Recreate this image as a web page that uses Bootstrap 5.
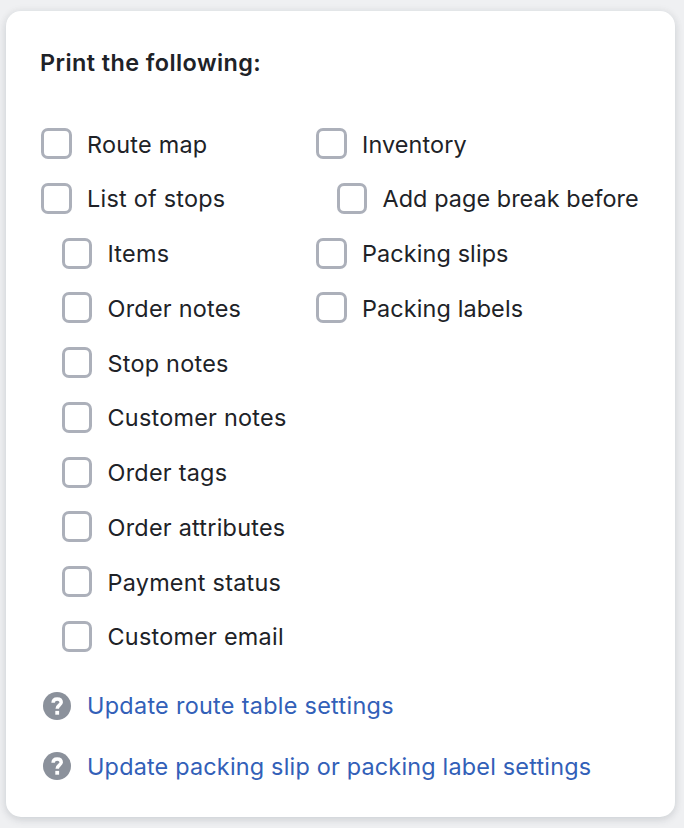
<!DOCTYPE html>
<html lang="en">
<head>
<meta charset="utf-8">
<meta name="viewport" content="width=device-width, initial-scale=1">
<title>Print options</title>
<link href="https://cdn.jsdelivr.net/npm/bootstrap@5.3.0/dist/css/bootstrap.min.css" rel="stylesheet">
<style>
body{background:#eff0f2;font-family:Inter,"Liberation Sans",sans-serif;font-size:23.4px;line-height:32px;letter-spacing:.25px;color:#202227;height:828px;overflow:hidden}
.print-card{margin:11px 9px 0 6px;height:806px;padding:36px 34px 0;border:0;border-radius:15px;background:#fff;box-shadow:0 0 10px rgba(33,43,54,.06),0 3px 9px rgba(33,43,54,.12)}
.print-title{font-size:23.4px;line-height:32px;font-weight:600;letter-spacing:.43px;margin:0}
.options{display:grid;grid-template-columns:275px 1fr;margin-top:37.3px}
.option{display:flex;align-items:center;height:54.75px;min-height:0;padding:0 0 0 1px;margin:0;white-space:nowrap}
.option.nested{padding-left:21.5px}
.option .form-check-input{float:none;flex:none;width:31px;height:31px;margin:0 15px 0 0;border:3px solid #acb0ba;border-radius:7px;background-color:#fff}
.option.nested .form-check-input{width:30.5px;margin-right:15.5px}
.option label{padding-top:2px}
.tight{letter-spacing:.12px}
.tight .nested{letter-spacing:.07px}
.help-links{margin-top:11.7px}
.help-links a{color:#3260b8;text-decoration:none;display:flex;align-items:center;height:60.5px;padding-left:3px;gap:16px;white-space:nowrap}
.help-links svg{flex:none}
.help-links .short-link{letter-spacing:.3px}
.help-links .long-link{letter-spacing:.2px}
.long-link span{padding-top:1px}
</style>
</head>
<body>
<main class="card print-card">
<h1 class="print-title">Print the following:</h1>
<div class="options">
<div>
<div class="form-check option"><input class="form-check-input" type="checkbox" id="o1"><label for="o1">Route map</label></div>
<div class="form-check option"><input class="form-check-input" type="checkbox" id="o2"><label for="o2">List of stops</label></div>
<div class="form-check option nested"><input class="form-check-input" type="checkbox" id="o3"><label for="o3">Items</label></div>
<div class="form-check option nested"><input class="form-check-input" type="checkbox" id="o4"><label for="o4">Order notes</label></div>
<div class="form-check option nested"><input class="form-check-input" type="checkbox" id="o5"><label for="o5">Stop notes</label></div>
<div class="form-check option nested"><input class="form-check-input" type="checkbox" id="o6"><label for="o6">Customer notes</label></div>
<div class="form-check option nested"><input class="form-check-input" type="checkbox" id="o7"><label for="o7">Order tags</label></div>
<div class="form-check option nested"><input class="form-check-input" type="checkbox" id="o8"><label for="o8">Order attributes</label></div>
<div class="form-check option nested"><input class="form-check-input" type="checkbox" id="o9"><label for="o9">Payment status</label></div>
<div class="form-check option nested"><input class="form-check-input" type="checkbox" id="o10"><label for="o10">Customer email</label></div>
</div>
<div class="tight">
<div class="form-check option"><input class="form-check-input" type="checkbox" id="o11"><label for="o11">Inventory</label></div>
<div class="form-check option nested"><input class="form-check-input" type="checkbox" id="o12"><label for="o12">Add page break before</label></div>
<div class="form-check option"><input class="form-check-input" type="checkbox" id="o13"><label for="o13">Packing slips</label></div>
<div class="form-check option"><input class="form-check-input" type="checkbox" id="o14"><label for="o14">Packing labels</label></div>
</div>
</div>
<div class="help-links">
<a href="#" class="short-link"><svg width="28" height="28" viewBox="0 0 28 28" aria-hidden="true"><circle cx="14" cy="14" r="14" fill="#8b919b"/><path d="M10.1 10.8C10.1 8.3 11.8 6.9 14.2 6.9s4 1.3 4 3.4c0 3-4 2.9-4 6.5" fill="none" stroke="#fff" stroke-width="3.5"/><path d="M12.3 18.9h3.8v3.8h-3.8z" fill="#fff"/></svg><span>Update route table settings</span></a>
<a href="#" class="long-link"><svg width="28" height="28" viewBox="0 0 28 28" aria-hidden="true"><circle cx="14" cy="14" r="14" fill="#8b919b"/><path d="M10.1 10.8C10.1 8.3 11.8 6.9 14.2 6.9s4 1.3 4 3.4c0 3-4 2.9-4 6.5" fill="none" stroke="#fff" stroke-width="3.5"/><path d="M12.3 18.9h3.8v3.8h-3.8z" fill="#fff"/></svg><span>Update packing slip or packing label settings</span></a>
</div>
</main>
<script src="https://cdn.jsdelivr.net/npm/bootstrap@5.3.0/dist/js/bootstrap.bundle.min.js"></script>
</body>
</html>
